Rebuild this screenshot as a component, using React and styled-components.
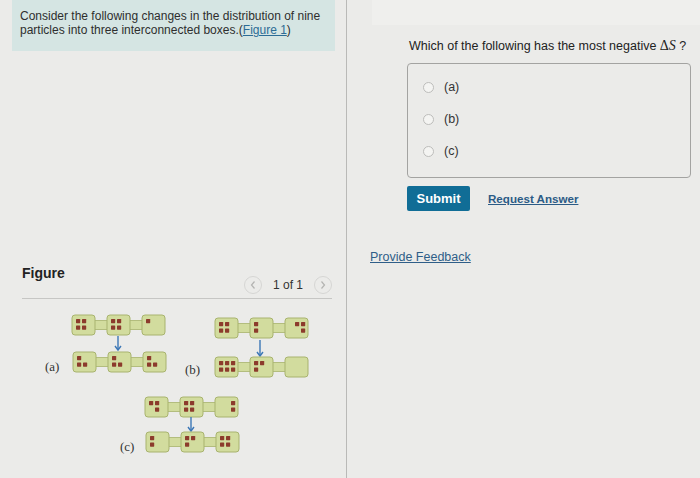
import React from "react";
import styled, { createGlobalStyle } from "styled-components";

const GlobalStyle = createGlobalStyle`
  html, body {
    margin: 0;
    padding: 0;
    background: #ebebe9;
    font-family: "Liberation Sans", Arial, sans-serif;
    color: #2a2a2a;
  }
`;

const Page = styled.div`
  display: grid;
  grid-template-columns: 346px 1px 1fr;
  height: 478px;
  overflow: hidden;
`;

const Divider = styled.div`
  background: #b9b9b7;
`;

const LeftPanel = styled.div`
  display: flex;
  flex-direction: column;
`;

const InfoBox = styled.div`
  margin: 0 11px 0 12px;
  height: 51px;
  box-sizing: border-box;
  padding: 9px 6px 9px 8px;
  background: #d5e5e3;
  font-size: 12px;
  line-height: 14px;
  color: #2e2e2e;
`;

const InfoLine = styled.div`
  white-space: nowrap;
`;

const Link = styled.a`
  color: ${(props) => props.color || "#2c6c96"};
  font-weight: ${(props) => (props.bold ? 700 : 400)};
  text-decoration: underline;
  white-space: nowrap;
  cursor: pointer;
`;

const FigureHead = styled.div`
  display: flex;
  justify-content: space-between;
  align-items: flex-start;
  margin: 214px 14px 0 22px;
  padding-bottom: 4px;
  border-bottom: 1px solid #c6c6c4;
`;

const FigureTitle = styled.div`
  font-size: 14px;
  font-weight: 700;
  line-height: 16px;
  color: #222;
`;

const Pager = styled.div`
  display: flex;
  align-items: center;
  gap: 11px;
  margin-top: 11px;
  font-size: 12px;
  color: #333;
`;

const PageButton = styled.span`
  width: 18px;
  height: 18px;
  box-sizing: border-box;
  border: 1px solid #d6d6d4;
  border-radius: 50%;
  display: flex;
  align-items: center;
  justify-content: center;
`;

const FigureArt = styled.svg`
  display: block;
  margin: 6px 0 0 30px;
`;

const RightPanel = styled.div`
  display: flex;
  flex-direction: column;
`;

const TopBand = styled.div`
  height: 25px;
  margin-left: 25px;
  background: #efefed;
`;

const Content = styled.div`
  padding: 0 9px 0 60px;
`;

const Question = styled.div`
  margin-top: 13px;
  padding-left: 2px;
  font-size: 12.5px;
  line-height: 16px;
  color: #222;
`;

const Delta = styled.span`
  font-family: "Liberation Serif", "Times New Roman", serif;
  font-size: 14px;
  & i {
    font-style: italic;
  }
`;

const Choices = styled.div`
  margin-top: 9px;
  width: 284px;
  box-sizing: border-box;
  border: 1px solid #a3a3a1;
  border-radius: 4px;
  padding: 7px 0 10px 15px;
`;

const Choice = styled.label`
  display: flex;
  align-items: center;
  gap: 10px;
  height: 32px;
  font-size: 12.5px;
  color: #333;
`;

const Radio = styled.span`
  width: 11px;
  height: 11px;
  box-sizing: border-box;
  border: 1px solid #bdbdbb;
  border-radius: 50%;
  background: #f4f4f2;
`;

const Actions = styled.div`
  display: flex;
  align-items: center;
  gap: 18px;
  margin-top: 8px;
  font-size: 11.6px;
`;

const SubmitButton = styled.button`
  width: 63px;
  height: 25px;
  border: none;
  border-radius: 2px;
  background: #106d96;
  color: #fff;
  font-family: inherit;
  font-size: 13px;
  font-weight: 700;
  padding: 0;
`;

const Feedback = styled.div`
  margin: 39px 0 0 23px;
  font-size: 12.5px;
`;

const BOX_FILL = "#d2dc9e";
const BOX_EDGE = "#a8b36e";
const DOT = "#8c3b2c";

const Chain = ({ x, y, boxes }) => (
  <g>
    {[0, 1].map((i) => (
      <rect
        key={"c" + i}
        x={x + 22 + i * 35}
        y={y + 5.5}
        width={14}
        height={9}
        fill={BOX_FILL}
        stroke={BOX_EDGE}
        strokeWidth={0.8}
      />
    ))}
    {boxes.map((dots, i) => (
      <g key={i}>
        <rect
          x={x + i * 35}
          y={y}
          width={23}
          height={20}
          rx={3}
          fill={BOX_FILL}
          stroke={BOX_EDGE}
          strokeWidth={1}
        />
        {dots.map(([c, r], k) => (
          <rect
            key={k}
            x={x + i * 35 + 4 + c * 6}
            y={y + 4 + r * 6.5}
            width={4.2}
            height={4.2}
            rx={0.6}
            fill={DOT}
          />
        ))}
      </g>
    ))}
  </g>
);

const Arrow = ({ x, y1, y2 }) => (
  <g stroke="#3c77b6" strokeWidth={1.4} fill="none">
    <line x1={x} y1={y1} x2={x} y2={y2} />
    <polyline points={`${x - 3},${y2 - 4} ${x},${y2} ${x + 3},${y2 - 4}`} />
  </g>
);

const SQ = [[0, 0], [1, 0], [0, 1], [1, 1]];
const L3 = [[0, 0], [0, 1], [1, 1]];

// page coordinates, shifted by the svg origin (30, 305)
const OX = 30;
const OY = 305;

const Diagram = () => (
  <FigureArt width={300} height={160} viewBox={`${OX} ${OY} 300 160`}>
    <g fontFamily='"Liberation Serif", serif' fontSize={13} fill="#333">
      <text x={45} y={371}>(a)</text>
      <text x={185} y={374}>(b)</text>
      <text x={120} y={451}>(c)</text>
    </g>
    <Chain x={72} y={315} boxes={[SQ, SQ, [[0, 0]]]} />
    <Arrow x={118} y1={336} y2={350} />
    <Chain x={73} y={352} boxes={[L3, L3, L3]} />

    <Chain x={215} y={318} boxes={[SQ, [[0, 0], [0, 1]], [[1, 0], [2, 0], [2, 1]]]} />
    <Arrow x={260} y1={340} y2={356} />
    <Chain
      x={215}
      y={357}
      boxes={[
        [[0, 0], [1, 0], [2, 0], [0, 1], [1, 1], [2, 1]],
        [[0, 0], [1, 0], [0, 1]],
        [],
      ]}
    />

    <Chain x={145} y={397} boxes={[[[0, 0], [1, 0], [1, 1]], SQ, [[2, 0], [2, 1]]]} />
    <Arrow x={191} y1={417} y2={431} />
    <Chain
      x={146}
      y={432}
      boxes={[[[0, 0], [0, 1]], [[0, 0], [1, 0], [0, 1]], SQ]}
    />
  </FigureArt>
);

const Chevron = ({ dir }) => (
  <svg width="8" height="10" viewBox="0 0 8 10">
    <polyline
      points={dir === "left" ? "5.5,1.5 2.5,5 5.5,8.5" : "2.5,1.5 5.5,5 2.5,8.5"}
      fill="none"
      stroke="#b3b3b1"
      strokeWidth="1.2"
    />
  </svg>
);

const App = () => {
  const options = ["(a)", "(b)", "(c)"];

  return (
    <>
      <GlobalStyle />
      <Page>
        <LeftPanel>
          <InfoBox>
            <InfoLine>
              Consider the following changes in the distribution of nine
            </InfoLine>
            <InfoLine>
              particles into three interconnected boxes.(<Link>Figure 1</Link>)
            </InfoLine>
          </InfoBox>
          <FigureHead>
            <FigureTitle>Figure</FigureTitle>
            <Pager>
              <PageButton>
                <Chevron dir="left" />
              </PageButton>
              <span>1 of 1</span>
              <PageButton>
                <Chevron dir="right" />
              </PageButton>
            </Pager>
          </FigureHead>
          <Diagram />
        </LeftPanel>
        <Divider />
        <RightPanel>
          <TopBand />
          <Content>
            <Question>
              Which of the following has the most negative{" "}
              <Delta>
                Δ<i>S</i>
              </Delta>{" "}
              ?
            </Question>
            <Choices>
              {options.map((o) => (
                <Choice key={o}>
                  <Radio />
                  {o}
                </Choice>
              ))}
            </Choices>
            <Actions>
              <SubmitButton>Submit</SubmitButton>
              <Link bold color="#2b5b86">
                Request Answer
              </Link>
            </Actions>
          </Content>
          <Feedback>
            <Link color="#2f5e88">Provide Feedback</Link>
          </Feedback>
        </RightPanel>
      </Page>
    </>
  );
};

export default App;
